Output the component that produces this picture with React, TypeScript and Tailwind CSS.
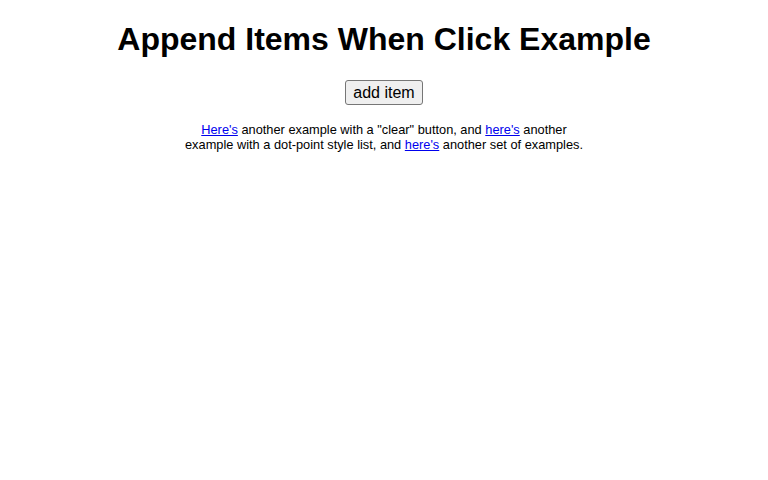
import { useState } from "react";

export default function App() {
  const [items, setItems] = useState<number[]>([]);

  return (
    <div className="flex flex-col items-center font-['Liberation_Sans',Arial,sans-serif] text-black">
      <h1 className="mt-[21px] mb-[22px] text-[32px] font-bold leading-[37px]">
        Append Items When Click Example
      </h1>

      <button
        className="rounded-[3px] border border-[#767676] bg-[#efefef] px-[7px] py-[2px] text-[16px] leading-[19px] text-black"
        onClick={() => setItems([...items, items.length + 1])}
      >
        add item
      </button>

      {items.length > 0 && (
        <div className="mt-2 flex flex-col items-center text-[16px]">
          {items.map((n) => (
            <div key={n}>item {n}</div>
          ))}
        </div>
      )}

      <p className="mt-[17px] max-w-[410px] text-center text-[12.8px] leading-[15px]">
        <a href="#" className="text-[#0000ee] underline">
          Here's
        </a>{" "}
        another example with a "clear" button, and{" "}
        <a href="#" className="text-[#0000ee] underline">
          here's
        </a>{" "}
        another example with a dot-point style list, and{" "}
        <a href="#" className="text-[#0000ee] underline">
          here's
        </a>{" "}
        another set of examples.
      </p>
    </div>
  );
}
